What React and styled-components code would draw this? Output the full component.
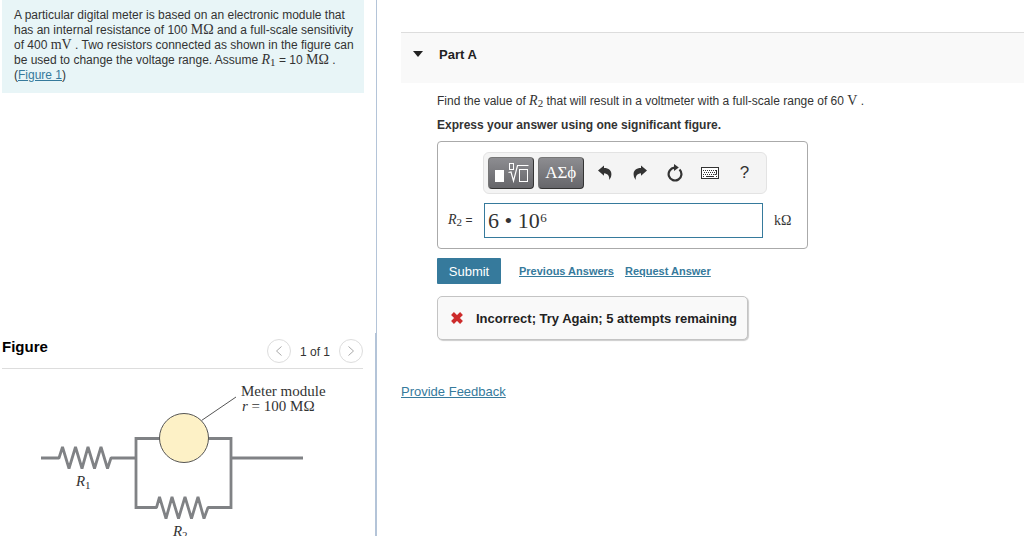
import React from 'react';
import styled, { createGlobalStyle } from 'styled-components';

const GlobalStyle = createGlobalStyle`
	* {
		box-sizing: border-box;
	}
	body {
		margin: 0;
		background: #fff;
		color: #333;
		font-family: 'Liberation Sans', Arial, sans-serif;
		font-size: 12px;
		line-height: 15px;
	}
`;

const Page = styled.div`
	display: grid;
	grid-template-columns: 377px minmax(0, 1fr);
	height: 100vh;
	overflow: hidden;
`;

// left side: problem text on top, figure viewer below

const SidePane = styled.aside`
	display: flex;
	flex-direction: column;
	min-height: 0;
`;

const ProblemPane = styled.section`
	flex: 1;
	min-height: 0;
	padding: 0 12px 0 2px;
	border-right: 1px solid #b4c4d8;
`;

const Introduction = styled.div`
	padding: 8px 8px 10px 12px;
	background: #e8f5f7;

	p {
		margin: 0;
	}
`;

const Link = styled.a`
	color: #367a9c;
	font-size: ${props => props.$size || 12}px;
	font-weight: ${props => (props.$bold ? 'bold' : 'normal')};
	text-decoration: underline;
`;

const Unit = styled.span`
	font-family: 'Liberation Serif', serif;
	font-size: 14px;
	line-height: 1px;
`;

const Variable = styled(Unit)`
	font-style: italic;

	sub {
		font-size: 11px;
		font-style: normal;
		line-height: 1px;
		vertical-align: -2px;
	}
`;

const FigurePane = styled.section`
	flex: 0 0 203px;
	overflow: hidden;
	padding: 0 12px 0 2px;
	border-right: 2px solid #b4c4d8;
`;

const FigureHeader = styled.header`
	display: flex;
	align-items: center;
	justify-content: space-between;
	height: 36px;
	border-bottom: 1px solid #ddd;
`;

const FigureTitle = styled.h2`
	margin: 0 0 8px;
	color: #000;
	font-size: 15px;
`;

const Pager = styled.nav`
	display: flex;
	align-items: center;
	gap: 9px;
`;

const PageCount = styled.span`
	padding-top: 3px;
`;

const PagerButton = styled.button`
	display: flex;
	align-items: center;
	justify-content: center;
	width: 24px;
	height: 24px;
	padding: 0;
	border: 1px solid #ddd;
	border-radius: 50%;
	background: #fff;
`;

const Circuit = styled.svg`
	display: block;
	width: 100%;
	height: auto;
	font-family: 'Liberation Serif', serif;
	font-size: 15px;
	fill: #333;
`;

// right side: the question

const MainPane = styled.main`
	min-width: 0;
	padding: 32px 0 0 24px;
`;

const PartHeader = styled.header`
	display: flex;
	align-items: center;
	gap: 16px;
	height: 51px;
	padding: 0 12px 8px;
	border-top: 1px solid #ddd;
	background: #f9f9f9;
`;

const PartTitle = styled.h2`
	margin: 0;
	color: #222;
	font-size: 13px;
`;

const PartBody = styled.div`
	padding: 11px 24px 0 36px;
`;

const Question = styled.p`
	margin: 0 0 9px;
`;

const Instruction = styled(Question)`
	margin-bottom: 8px;
	font-weight: bold;
`;

const AnswerBox = styled.form`
	width: 371px;
	max-width: 100%;
	padding: 10px;
	border: 1px solid #aaa;
	border-radius: 4px;
`;

const Toolbar = styled.div`
	display: flex;
	align-items: center;
	width: 284px;
	height: 42px;
	margin: 0 0 9px 35px;
	padding: 0 4px;
	border: 1px solid #e3e3e3;
	border-radius: 6px;
	background: #f4f4f4;
`;

const PaletteButton = styled.button`
	display: flex;
	align-items: center;
	justify-content: center;
	width: 46px;
	height: 32px;
	margin-right: 4px;
	padding: 0;
	border: 1px solid #333;
	border-top-color: #777;
	border-left-color: #777;
	border-radius: 4px;
	background: linear-gradient(#8d8d91, #66666a);
	color: #fff;
	font-family: 'Liberation Serif', serif;
	font-size: 17px;
`;

const ToolButton = styled.button`
	display: flex;
	align-items: center;
	justify-content: center;
	width: 35px;
	height: 31px;
	padding: 0;
	border: none;
	background: none;
	color: #333;
	font-family: inherit;
	font-size: 17px;
`;

const AnswerRow = styled.div`
	display: flex;
	align-items: center;
`;

const AnswerLabel = styled.label`
	flex: 0 0 36px;
	white-space: nowrap;
`;

const AnswerInput = styled.input`
	width: 279px;
	height: 35px;
	padding: 0 3px;
	border: 1px solid #367a9c;
	color: #333;
	font-family: 'Liberation Serif', serif;
	font-size: 22px;
`;

const AnswerUnit = styled(Unit)`
	margin-left: 11px;
`;

const Actions = styled.div`
	display: flex;
	align-items: center;
	gap: 11px;
	margin: 9px 0 12px;
`;

const SubmitButton = styled.button`
	width: 64px;
	height: 26px;
	margin-right: 7px;
	padding: 0;
	border: none;
	border-radius: 1px;
	background: #367a9c;
	color: #fff;
	font-family: inherit;
	font-size: 13px;
`;

const Feedback = styled.div`
	display: inline-flex;
	align-items: center;
	gap: 12px;
	height: 44px;
	padding: 0 10px 0 12px;
	border: 1px solid #c4c4c4;
	border-radius: 5px;
	background: #f9f9f9;
	box-shadow: 1px 1px 1px #ccc;
	color: #222;
	font-weight: bold;
	font-size: 13px;
`;

const Footer = styled.footer`
	margin-top: 44px;
`;

function UndoIcon({ flipped }) {
	return (
		<svg width="14" height="16" viewBox="0 0 14 16" aria-hidden="true">
			<path
				fill="#333"
				transform={flipped ? 'translate(14 0) scale(-1 1)' : undefined}
				d="M0 5.5 L6 0.5 V3 C10.8 3 13.600 5.500 13.400 9.500 C13.300 12 12.200 13.500 11.200 15 C11.600 11 10 8.500 6 8.200 V10.800 Z"
			/>
		</svg>
	);
}

function ResetIcon() {
	return (
		<svg width="16" height="18" viewBox="0 0 16 18" aria-hidden="true">
			<path d="M12.500 5.500 A6.400 6.400 0 1 1 7.500 3.700" fill="none" stroke="#333" strokeWidth="2.200" />
			<path d="M7 0 L11.800 3.600 L7 7 Z" fill="#333" />
		</svg>
	);
}

function KeyboardIcon() {
	return (
		<svg width="18" height="12" viewBox="0 0 18 12" aria-hidden="true">
			<rect x="0.5" y="0.5" width="17" height="11" fill="#fff" stroke="#333" />
			<path d="M2 3.500 H15 M3 5.500 H14" stroke="#333" strokeDasharray="1 1" />
			<path d="M2 7.500 H13" stroke="#333" strokeDasharray="1 1" />
			<path d="M15.500 3 V7.500 H13.500" fill="none" stroke="#333" />
			<path d="M2 9.500 H3 M5 9.500 H13 M15 9.500 H16" stroke="#333" />
		</svg>
	);
}

function TemplateIcon() {
	return (
		<svg width="36" height="22" viewBox="0 0 36 22" fill="none" stroke="#fff" aria-hidden="true">
			<rect x="2" y="8" width="9" height="12" fill="#fff" stroke="none" />
			<rect x="16.500" y="1.500" width="4" height="6" />
			<path d="M15.500 10.500 L18 10 L20.500 19 L24.500 3.500 H35.500" strokeWidth="1.200" />
			<rect x="26.500" y="7.500" width="8" height="12" />
		</svg>
	);
}

function Chevron({ right }) {
	return (
		<svg width="8" height="12" viewBox="0 0 8 12" fill="none" stroke="#aaa" aria-hidden="true">
			<path d={right ? 'M1.5 1.5 L6.5 6 L1.5 10.5' : 'M6.5 1.5 L1.5 6 L6.5 10.5'} />
		</svg>
	);
}

function CircuitFigure() {
	return (
		<Circuit viewBox="0 0 361 180" role="img" aria-label="Circuit with meter module">
			<g fill="none" stroke="#808285" strokeWidth="2.800" strokeLinejoin="bevel">
				<path d="M39 89 H57 L60.500 78 L67 99.500 L73.500 78 L80 99.500 L86 78 L92.500 99.500 L99 78 L105.500 99.500 L109 89 H134" />
				<path strokeLinejoin="miter" d="M159 69.500 H134 V138.500 H153" />
				<path d="M152 138.500 H154.500 L157.500 128 L164 149.500 L170 128 L176.500 149.500 L183 128 L189.500 149.500 L196 128 L202 149.500 L206 138.500 H208" />
				<path strokeLinejoin="miter" d="M207 138.500 H229 V69.500 H206" />
				<path d="M229 89 H301" />
			</g>
			<path d="M199.500 51.500 L234 28" stroke="#555" />
			<circle cx="182" cy="69" r="24.500" fill="#fdf1c6" stroke="#555" />
			<text x="239" y="27">Meter module</text>
			<text x="240" y="42">
				<tspan fontStyle="italic">r</tspan> = 100 MΩ
			</text>
			<text x="74" y="117" fontStyle="italic">R</text>
			<text x="83" y="120" fontSize="11">1</text>
			<text x="171" y="167" fontStyle="italic">R</text>
			<text x="180" y="170" fontSize="11">2</text>
		</Circuit>
	);
}

function Resistor({ index }) {
	return (
		<Variable>
			R<sub>{index}</sub>
		</Variable>
	);
}

class App extends React.Component {
	constructor(props) {
		super(props);
		this.state = { answer: '6 • 10⁶' };
	}

	changeAnswer = event => {
		this.setState({ answer: event.target.value });
	};

	submitAnswer = event => {
		event.preventDefault();
	};

	render() {
		return (
			<Page>
				<GlobalStyle />
				<SidePane>
					<ProblemPane>
						<Introduction>
							<p>
								A particular digital meter is based on an electronic module that has an internal
								resistance of 100 <Unit>MΩ</Unit> and a full-scale sensitivity of 400{' '}
								<Unit>mV</Unit> . Two resistors connected as shown in the figure can be used to
								change the voltage range. Assume <Resistor index={1} /> = 10 <Unit>MΩ</Unit> .
							</p>
							<p>
								(<Link href="#figure">Figure 1</Link>)
							</p>
						</Introduction>
					</ProblemPane>
					<FigurePane id="figure">
						<FigureHeader>
							<FigureTitle>Figure</FigureTitle>
							<Pager>
								<PagerButton type="button" aria-label="Previous figure">
									<Chevron />
								</PagerButton>
								<PageCount>1 of 1</PageCount>
								<PagerButton type="button" aria-label="Next figure">
									<Chevron right />
								</PagerButton>
							</Pager>
						</FigureHeader>
						<CircuitFigure />
					</FigurePane>
				</SidePane>
				<MainPane>
					<PartHeader>
						<svg width="10" height="6" viewBox="0 0 10 6" aria-hidden="true">
							<path d="M0 0 H10 L5 6 Z" fill="#222" />
						</svg>
						<PartTitle>Part A</PartTitle>
					</PartHeader>
					<PartBody>
						<Question>
							Find the value of <Resistor index={2} /> that will result in a voltmeter with a
							full-scale range of 60 <Unit>V</Unit> .
						</Question>
						<Instruction>Express your answer using one significant figure.</Instruction>
						<AnswerBox id="answerForm" onSubmit={this.submitAnswer}>
							<Toolbar>
								<PaletteButton type="button" aria-label="Templates">
									<TemplateIcon />
								</PaletteButton>
								<PaletteButton type="button">ΑΣϕ</PaletteButton>
								<ToolButton type="button" aria-label="Undo">
									<UndoIcon />
								</ToolButton>
								<ToolButton type="button" aria-label="Redo">
									<UndoIcon flipped />
								</ToolButton>
								<ToolButton type="button" aria-label="Reset">
									<ResetIcon />
								</ToolButton>
								<ToolButton type="button" aria-label="Keyboard shortcuts">
									<KeyboardIcon />
								</ToolButton>
								<ToolButton type="button">?</ToolButton>
							</Toolbar>
							<AnswerRow>
								<AnswerLabel htmlFor="answer">
									<Resistor index={2} /> =
								</AnswerLabel>
								<AnswerInput
									id="answer"
									type="text"
									value={this.state.answer}
									onChange={this.changeAnswer}
								/>
								<AnswerUnit>kΩ</AnswerUnit>
							</AnswerRow>
						</AnswerBox>
						<Actions>
							<SubmitButton type="submit" form="answerForm">
								Submit
							</SubmitButton>
							<Link href="#previous" $bold $size={11}>
								Previous Answers
							</Link>
							<Link href="#request" $bold $size={11}>
								Request Answer
							</Link>
						</Actions>
						<Feedback role="status">
							<svg width="14" height="14" viewBox="0 0 14 14" aria-hidden="true">
								<path d="M2.500 2.500 L11.500 11.500 M11.500 2.500 L2.500 11.500" stroke="#cd2c2c" strokeWidth="4" />
							</svg>
							Incorrect; Try Again; 5 attempts remaining
						</Feedback>
					</PartBody>
					<Footer>
						<Link href="#feedback" $size={13}>
							Provide Feedback
						</Link>
					</Footer>
				</MainPane>
			</Page>
		);
	}
}

export default App;
